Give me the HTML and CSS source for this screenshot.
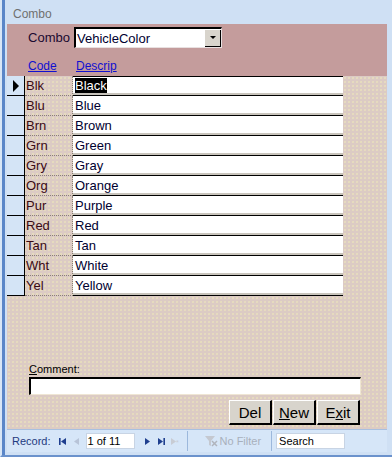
FILE: index.html
```html
<!DOCTYPE html>
<html lang="en">

<head>
    <meta charset="UTF-8">
    <title>Combo</title>
    <link rel="stylesheet" href="styles.css">
</head>

<body>
    <div class="frame">
        <div class="titlebar">Combo</div>

        <div class="form">
            <div class="form-header">
                <div class="combo-row">
                    <label class="combo-label">Combo</label>
                    <div class="combo-box">
                        <span class="combo-value">VehicleColor</span>
                        <span class="combo-btn"><span class="arrow"></span></span>
                    </div>
                </div>
                <div class="col-heads">
                    <a class="head-code">Code</a>
                    <a class="head-descrip">Descrip</a>
                </div>
            </div>

            <div class="sheet">
                <div class="row current">
                    <div class="sel"><span class="pointer"></span></div>
                    <div class="code">Blk</div>
                    <div class="descrip"><span class="hilite">Black</span></div>
                </div>
                <div class="row">
                    <div class="sel"></div>
                    <div class="code">Blu</div>
                    <div class="descrip">Blue</div>
                </div>
                <div class="row">
                    <div class="sel"></div>
                    <div class="code">Brn</div>
                    <div class="descrip">Brown</div>
                </div>
                <div class="row">
                    <div class="sel"></div>
                    <div class="code">Grn</div>
                    <div class="descrip">Green</div>
                </div>
                <div class="row">
                    <div class="sel"></div>
                    <div class="code">Gry</div>
                    <div class="descrip">Gray</div>
                </div>
                <div class="row">
                    <div class="sel"></div>
                    <div class="code">Org</div>
                    <div class="descrip">Orange</div>
                </div>
                <div class="row">
                    <div class="sel"></div>
                    <div class="code">Pur</div>
                    <div class="descrip">Purple</div>
                </div>
                <div class="row">
                    <div class="sel"></div>
                    <div class="code">Red</div>
                    <div class="descrip">Red</div>
                </div>
                <div class="row">
                    <div class="sel"></div>
                    <div class="code">Tan</div>
                    <div class="descrip">Tan</div>
                </div>
                <div class="row">
                    <div class="sel"></div>
                    <div class="code">Wht</div>
                    <div class="descrip">White</div>
                </div>
                <div class="row">
                    <div class="sel"></div>
                    <div class="code">Yel</div>
                    <div class="descrip">Yellow</div>
                </div>
            </div>

            <div class="footer-area">
                <label class="comment-label"><u>C</u>omment:</label>
                <div class="comment-box"></div>
                <div class="buttons">
                    <button class="btn">Del</button>
                    <button class="btn"><u>N</u>ew</button>
                    <button class="btn">E<u>x</u>it</button>
                </div>
            </div>

            <div class="navbar">
                <span class="nav-label">Record:</span>
                <span class="nav-icon">
                    <svg width="9" height="9" viewBox="0 0 9 9"><rect x="1" y="1" width="1.6" height="7" fill="#1f3f8f"/><polygon points="8,1 3,4.5 8,8" fill="#1f3f8f"/></svg>
                </span>
                <span class="nav-icon">
                    <svg width="9" height="9" viewBox="0 0 9 9"><polygon points="7,1 2,4.5 7,8" fill="#b8c4d8"/></svg>
                </span>
                <span class="nav-pos">1 of 11</span>
                <span class="nav-icon">
                    <svg width="9" height="9" viewBox="0 0 9 9"><polygon points="2,1 7,4.5 2,8" fill="#1f3f8f"/></svg>
                </span>
                <span class="nav-icon">
                    <svg width="9" height="9" viewBox="0 0 9 9"><polygon points="1,1 6,4.5 1,8" fill="#1f3f8f"/><rect x="6.4" y="1" width="1.6" height="7" fill="#1f3f8f"/></svg>
                </span>
                <span class="nav-icon">
                    <svg width="11" height="9" viewBox="0 0 11 9"><polygon points="1,1 6,4.5 1,8" fill="#c8ccd4"/><text x="6" y="8" font-size="7" fill="#c8ccd4" font-family="Liberation Sans, sans-serif">*</text></svg>
                </span>
                <span class="nav-sep"></span>
                <span class="nav-filter">
                    <svg width="14" height="12" viewBox="0 0 14 12"><polygon points="1,1 11,1 7,6 7,11 5,10 5,6" fill="#c4c8d0"/><line x1="8" y1="6" x2="13" y2="11" stroke="#b0b4bc" stroke-width="1.5"/><line x1="13" y1="6" x2="8" y2="11" stroke="#b0b4bc" stroke-width="1.5"/></svg>
                    No Filter
                </span>
                <span class="nav-sep"></span>
                <span class="nav-search">Search</span>
            </div>
        </div>
    </div>
</body>

</html>
```

FILE: styles.css
```css
body {
    margin: 0;
    padding: 0;
    font-family: 'Liberation Sans', Arial, sans-serif;
    font-size: 12px;
}

.frame {
    width: 392px;
    height: 457px;
    box-sizing: border-box;
    background-color: #cfe0f4;
    border-left: 2px solid #d8e6f6;
    box-shadow: inset 3px 0 0 #5a86c8;
    padding: 0 5px 3px 5px;
    display: flex;
    flex-direction: column;
    border-bottom: 2px solid #6b92cc;
}

.titlebar {
    height: 24px;
    line-height: 28px;
    padding-left: 6px;
    color: #707070;
    font-size: 12px;
    flex-shrink: 0;
}

.form {
    flex: 1;
    display: flex;
    flex-direction: column;
    background-color: #dccbc4;
    background-image: radial-gradient(#f0ecb8 0.6px, transparent 0.8px);
    background-size: 4px 4px;
}

/* header section */
.form-header {
    height: 52px;
    box-sizing: border-box;
    background-color: #c49c9c;
    padding-top: 3px;
}

.combo-row {
    display: flex;
    align-items: center;
    height: 21px;
}

.combo-label {
    width: 63px;
    text-align: right;
    padding-right: 4px;
    color: #1a0a30;
    font-size: 13px;
}

.combo-box {
    width: 148px;
    height: 21px;
    box-sizing: border-box;
    background-color: #fff;
    border-top: 2px solid #000;
    border-left: 2px solid #000;
    border-right: 1px solid #e8e0e0;
    border-bottom: 1px solid #e8e0e0;
    display: flex;
    align-items: center;
}

.combo-value {
    flex: 1;
    padding-left: 1px;
    font-size: 13px;
    color: #000030;
}

.combo-btn {
    width: 16px;
    height: 17px;
    box-sizing: border-box;
    background-color: #d8d4cc;
    border-right: 1px solid #000;
    border-bottom: 1px solid #000;
    display: flex;
    align-items: center;
    justify-content: center;
}

.arrow {
    width: 0;
    height: 0;
    border-left: 3px solid transparent;
    border-right: 3px solid transparent;
    border-top: 3px solid #000;
}

.col-heads {
    display: flex;
    padding-top: 11px;
    font-size: 12px;
}

.col-heads a {
    color: #1010d0;
    text-decoration: underline;
}

.head-code {
    width: 48px;
    padding-left: 21px;
}

/* datasheet */
.sheet {
    width: 336px;
}

.row {
    display: flex;
    height: 20px;
}

.sel {
    width: 18px;
    box-sizing: border-box;
    background-color: #d4e4f6;
    border-right: 1px solid #000;
    border-bottom: 1px solid #000;
    display: flex;
    align-items: center;
    justify-content: center;
}

.pointer {
    width: 0;
    height: 0;
    border-top: 6px solid transparent;
    border-bottom: 6px solid transparent;
    border-left: 6px solid #000;
}

.code {
    width: 48px;
    box-sizing: border-box;
    border-right: 1px dotted #8a8078;
    border-bottom: 1px dotted #8a8078;
    padding-left: 1px;
    line-height: 19px;
    font-size: 13px;
    color: #3a0a14;
}

.descrip {
    flex: 1;
    box-sizing: border-box;
    background-color: #fff;
    border-bottom: 1px solid #000;
    box-shadow: inset 0 -2px 0 #c8c4bc;
    padding-left: 2px;
    line-height: 19px;
    font-size: 13px;
    color: #000030;
}

.row:first-child .descrip {
    border-top: 1px solid #000;
    line-height: 18px;
}

.hilite {
    background-color: #000;
    color: #fff;
}

/* comment and buttons */
.footer-area {
    flex: 1;
    display: flex;
    flex-direction: column;
    padding: 67px 26px 0 22px;
}

.comment-label {
    font-size: 11px;
    color: #000;
    height: 13px;
}

.comment-box {
    height: 18px;
    box-sizing: border-box;
    margin-top: 1px;
    background-color: #fff;
    border-top: 2px solid #000;
    border-left: 2px solid #000;
    border-right: 1px solid #efe6d4;
    border-bottom: 1px solid #efe6d4;
}

.buttons {
    display: flex;
    justify-content: flex-end;
    margin-top: 5px;
    margin-right: 1px;
}

.btn {
    width: 43px;
    height: 25px;
    margin-left: 1px;
    background-color: #d8d4cc;
    border: none;
    border-top: 1px solid #fff;
    border-left: 1px solid #fff;
    border-right: 2px solid #000;
    border-bottom: 2px solid #000;
    font-family: 'Liberation Sans', Arial, sans-serif;
    font-size: 15px;
    color: #000;
    padding: 0;
}

/* navigation bar */
.navbar {
    height: 22px;
    display: flex;
    align-items: center;
    background-color: #d6e6f8;
    border-top: 1px solid #a8c0e0;
    font-size: 11px;
    padding-left: 5px;
}

.nav-label {
    color: #1f3a80;
    margin-right: 5px;
}

.nav-icon {
    display: flex;
    align-items: center;
    width: 14px;
    justify-content: center;
}

.nav-pos {
    width: 49px;
    height: 16px;
    box-sizing: border-box;
    background-color: #fff;
    border: 1px solid #c8d4e4;
    line-height: 14px;
    padding-left: 1px;
    color: #000;
    margin: 0 6px 0 2px;
}

.nav-sep {
    width: 1px;
    height: 20px;
    background-color: #9cb8dc;
    margin: 0 4px;
}

.nav-filter {
    display: flex;
    align-items: center;
    gap: 2px;
    color: #a8b0bc;
    padding: 0 6px 0 12px;
}

.nav-search {
    width: 69px;
    height: 16px;
    box-sizing: border-box;
    background-color: #fff;
    border: 1px solid #c8d4e4;
    line-height: 14px;
    padding-left: 2px;
    color: #000;
}
```
